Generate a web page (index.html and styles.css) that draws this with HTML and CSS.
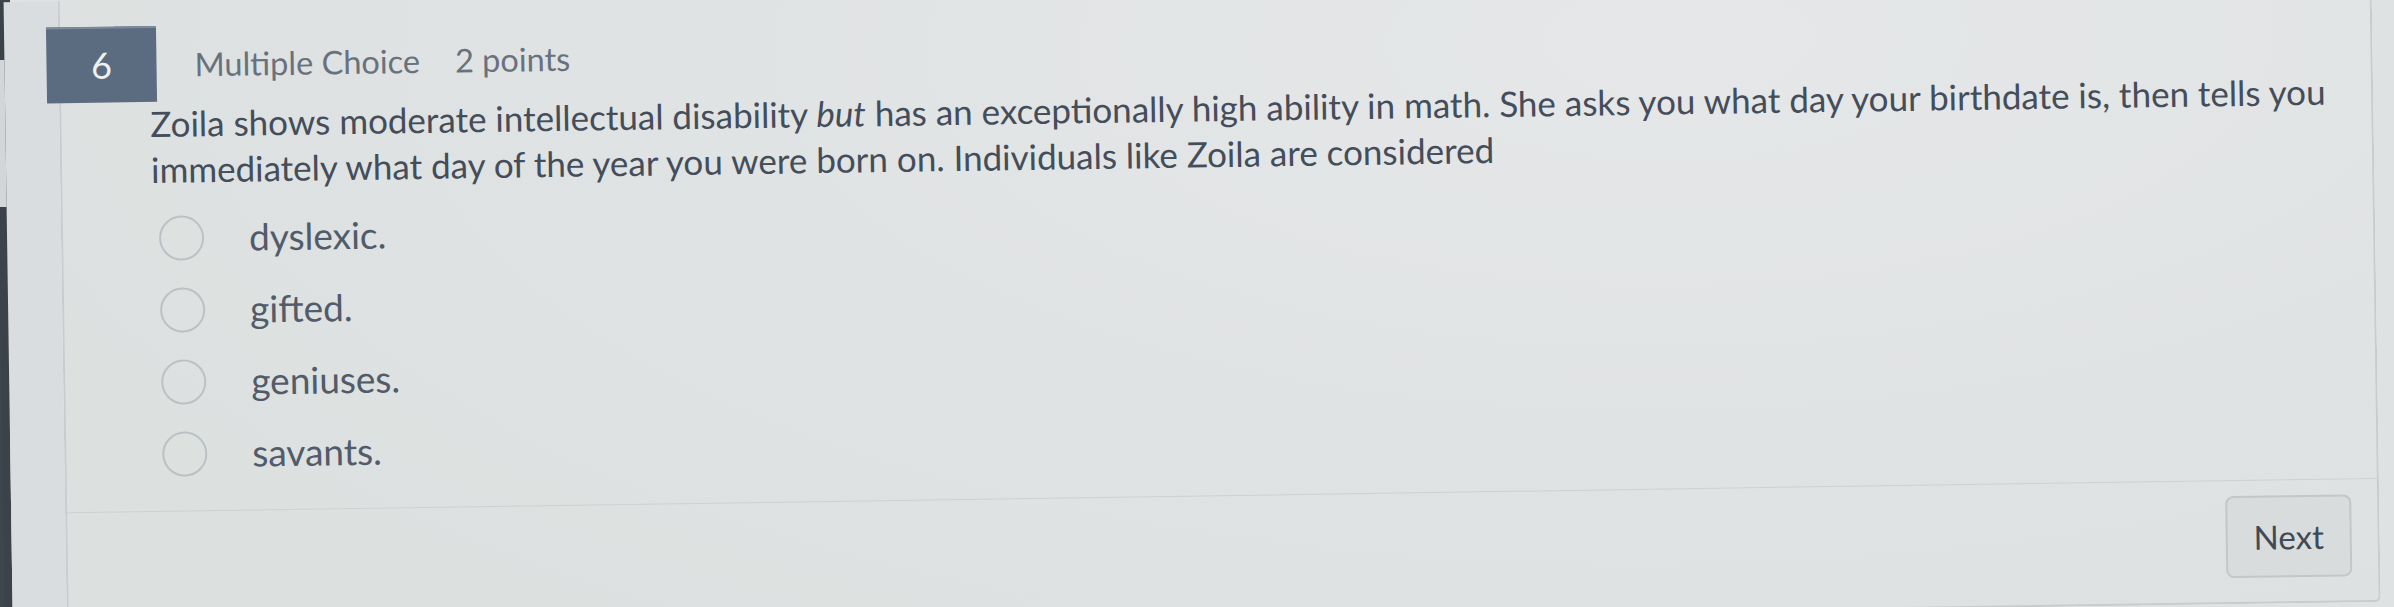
FILE: index.html
```html
<!DOCTYPE html>
<html lang="en">
<head>
<meta charset="utf-8">
<title>Question 6</title>
<link rel="stylesheet" href="styles.css">
</head>
<body>
<div class="screen">
  <div class="bezel"></div>
  <div class="gutter"></div>
  <main class="card">
    <header class="q-head">
      <div class="q-num">6</div>
      <span class="q-type">Multiple Choice</span>
      <span class="q-points">2 points</span>
    </header>
    <p class="q-text">Zoila shows moderate intellectual disability <em>but</em> has an exceptionally high ability in math. She asks you what day your birthdate is, then tells you immediately what day of the year you were born on. Individuals like Zoila are considered</p>
    <ul class="choices">
      <li class="choice"><span class="radio"></span><span class="label">dyslexic.</span></li>
      <li class="choice"><span class="radio"></span><span class="label">gifted.</span></li>
      <li class="choice"><span class="radio"></span><span class="label">geniuses.</span></li>
      <li class="choice"><span class="radio"></span><span class="label">savants.</span></li>
    </ul>
    <footer class="q-foot">
      <button class="next" type="button">Next</button>
    </footer>
  </main>
  <div class="edge"></div>
</div>
</body>
</html>
```

FILE: styles.css
```css
html, body {
  margin: 0;
  height: 100%;
  overflow: hidden;
}

body {
  background: linear-gradient(to right, #3f454d 0 10px, #dfe2e3 10px);
  font-family: Lato, "Open Sans", "Noto Sans", sans-serif;
}

.screen {
  display: flex;
  align-items: flex-start;
  height: 690px;
  transform: rotate(-0.85deg);
  transform-origin: 150px 300px;
}

.bezel {
  flex: none;
  width: 8px;
  align-self: stretch;
  background: linear-gradient(#3c424a 0 58px, #d3d6d8 58px 205px, #3c424a 205px);
}

.gutter {
  flex: none;
  width: 54px;
  align-self: stretch;
  background: #dadddf;
}

.card {
  flex: none;
  width: 2314px;
  box-sizing: border-box;
  padding-top: 26px;
  border: 2px solid #c8ccd0;
  border-top: 0;
  border-radius: 0 0 6px 6px;
  background: radial-gradient(ellipse 80% 120% at 70% 10%, #e5e7e8 0%, #e0e3e4 55%, #dce0df 100%);
}

.edge {
  flex: 1;
  align-self: stretch;
  background: #dfe2e2;
}

/* header */
.q-head {
  display: flex;
  align-items: center;
  height: 76px;
  margin-left: -14px;
}

.q-num {
  display: flex;
  align-items: center;
  justify-content: center;
  width: 110px;
  height: 76px;
  background: #5b6b80;
  box-shadow: inset 0 2px 0 #7c8a9b;
  color: #eef1f1;
  font-size: 36px;
}

.q-type,
.q-points {
  margin-top: 2px;
  font-size: 32.5px;
  line-height: 40px;
  color: #69717d;
}

.q-type {
  margin-left: 38px;
}

.q-points {
  margin-left: 35px;
}

/* question */
.q-text {
  margin: -2px 20px 0 89px;
  font-size: 35px;
  line-height: 46px;
  color: #444d59;
}

.q-text em {
  font-style: italic;
}

/* choices */
.choices {
  list-style: none;
  margin: 10px 0 0;
  padding: 0 0 0 96px;
}

.choice {
  display: flex;
  align-items: center;
  height: 72px;
}

.radio {
  flex: none;
  width: 45px;
  height: 45px;
  box-sizing: border-box;
  border: 2px solid #bcc1c5;
  border-radius: 50%;
  margin-right: 45px;
}

.label {
  font-size: 37px;
  line-height: 44px;
  color: #525b6a;
}

/* footer */
.q-foot {
  display: flex;
  justify-content: flex-end;
  margin-top: 21px;
  padding: 15px 26px 24px;
  border-top: 1px solid #cdd1d3;
}

.next {
  width: 126px;
  height: 82px;
  box-sizing: border-box;
  border: 2px solid #c3c7c9;
  border-radius: 8px;
  background: #d8dcdc;
  font-family: Lato, "Open Sans", sans-serif;
  font-size: 33px;
  color: #414954;
}
```
